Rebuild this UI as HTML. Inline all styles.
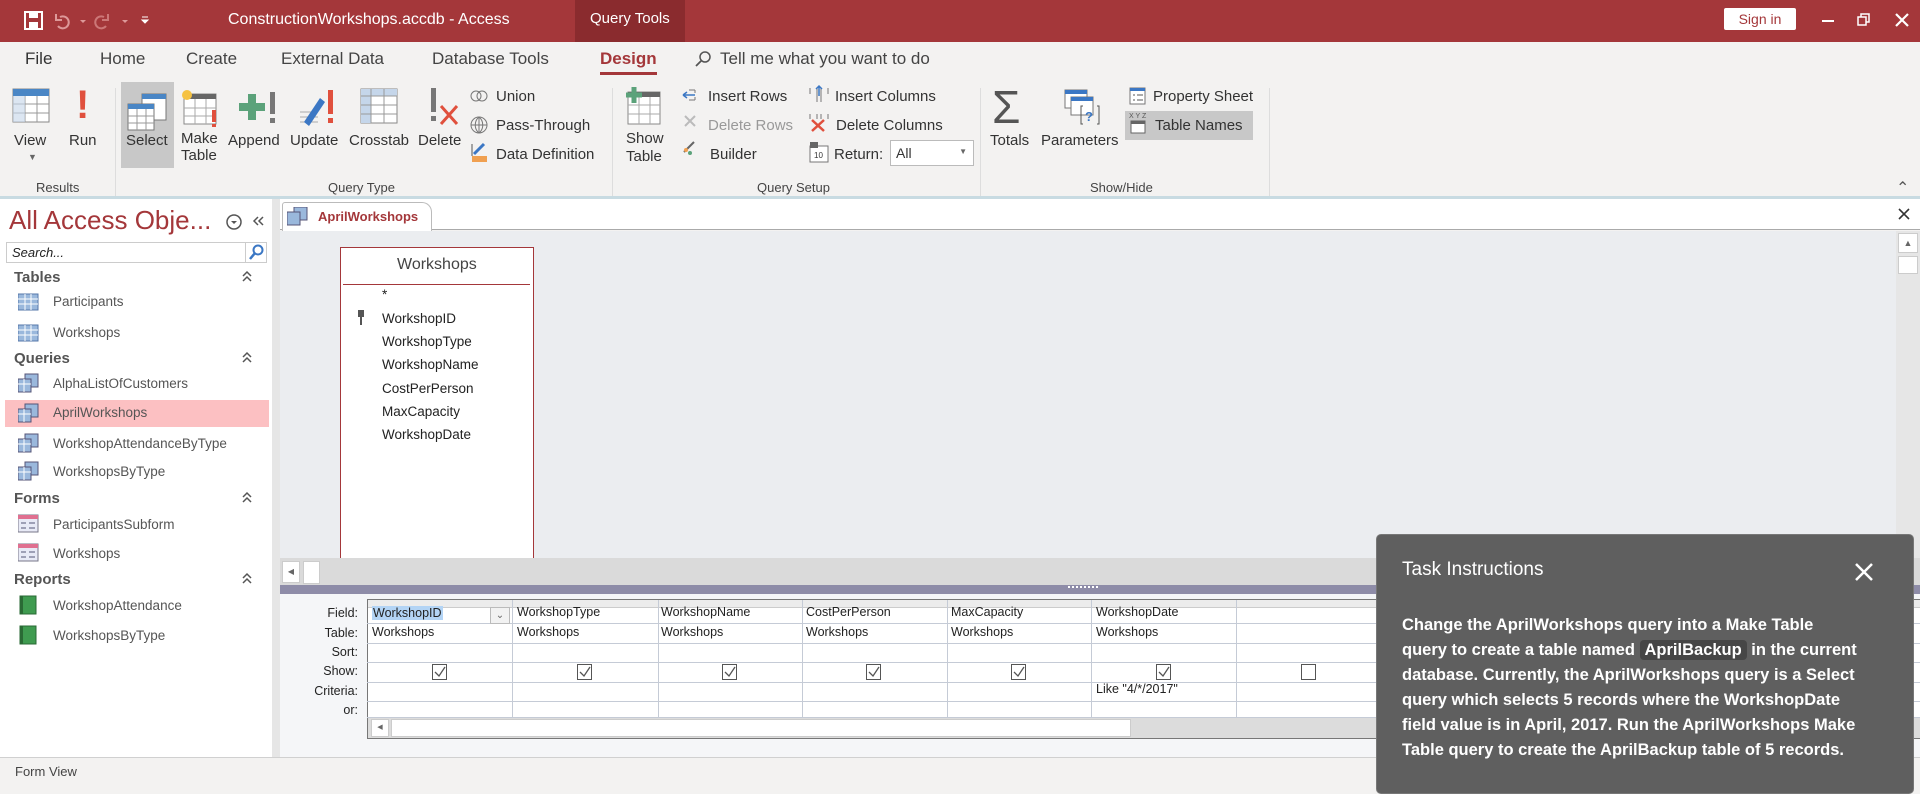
<!DOCTYPE html>
<html><head><meta charset="utf-8">
<style>
*{margin:0;padding:0;box-sizing:border-box}
body{width:1920px;height:788px;overflow:hidden;position:relative;font-family:"Liberation Sans",sans-serif;background:#f3f2f1;color:#333}
.a{position:absolute;white-space:nowrap}
.t{font-size:15px;color:#333}
.lbl{font-size:13px;color:#444}
.nav{font-size:13.5px;color:#555}
.hd{font-size:15px;font-weight:bold;color:#555}
.fld{font-size:13.5px;color:#222}
.g{font-size:12.5px;color:#222}
</style></head><body>
<!-- title bar -->
<div class="a" style="left:0;top:0;width:1920px;height:42px;background:#a4373a"></div>
<div class="a" style="left:575px;top:0;width:110px;height:42px;background:#8a2b2e"></div>
<div class="a" style="left:590px;top:10px;color:#fff;font-size:15px">Query Tools</div>
<div class="a" style="left:228px;top:11px;color:#fff;font-size:16px">ConstructionWorkshops.accdb - Access</div>
<svg class="a" style="left:22px;top:9px" width="140" height="24" viewBox="0 0 140 24">
<rect x="3" y="3" width="17" height="17" fill="none" stroke="#fff" stroke-width="2"/><rect x="7" y="3" width="9" height="6" fill="#fff"/><rect x="7" y="13" width="9" height="7" fill="#fff"/>
<path d="M38 8 a6 6 0 1 1 -2 9" fill="none" stroke="#d99" stroke-width="2"/><path d="M34 5 l0 6 l6 0" fill="none" stroke="#d99" stroke-width="2"/>
<path d="M58 11 l3 3 l3 -3z" fill="#d99"/>
<path d="M82 8 a6 6 0 1 0 2 9" fill="none" stroke="#c77" stroke-width="2"/><path d="M86 5 l0 6 l-6 0" fill="none" stroke="#c77" stroke-width="2"/>
<path d="M100 11 l3 3 l3 -3z" fill="#d99"/>
<path d="M120 8 h6 M120 11 l3 3 l3 -3z" stroke="#fff" fill="#fff"/>
</svg>
<div class="a" style="left:1724px;top:8px;width:72px;height:22px;background:#fff;border-radius:2px;color:#a4373a;font-size:14px;text-align:center;line-height:22px">Sign in</div>
<div class="a" style="left:1822px;top:20px;width:12px;height:2px;background:#fff"></div>
<svg class="a" style="left:1857px;top:13px" width="14" height="14"><rect x="1" y="4" width="8" height="8" fill="none" stroke="#fff" stroke-width="1.5"/><path d="M4 4V1h8v8H9" fill="none" stroke="#fff" stroke-width="1.5"/></svg>
<svg class="a" style="left:1895px;top:13px" width="14" height="14"><path d="M1 1L13 13M13 1L1 13" stroke="#fff" stroke-width="2.2"/></svg>
<!-- tabs -->
<div class="a" style="left:25px;top:49px;font-size:17px;color:#333">File</div>
<div class="a" style="left:100px;top:49px;font-size:17px;color:#444">Home</div>
<div class="a" style="left:186px;top:49px;font-size:17px;color:#444">Create</div>
<div class="a" style="left:281px;top:49px;font-size:17px;color:#444">External Data</div>
<div class="a" style="left:432px;top:49px;font-size:17px;color:#444">Database Tools</div>
<div class="a" style="left:600px;top:49px;font-size:17px;color:#a4373a;font-weight:bold">Design</div>
<div class="a" style="left:600px;top:72px;width:57px;height:3px;background:#a4373a"></div>
<svg class="a" style="left:694px;top:50px" width="18" height="18"><circle cx="11" cy="7" r="5" fill="none" stroke="#555" stroke-width="1.5"/><path d="M7 11L2 16" stroke="#555" stroke-width="1.8"/></svg>
<div class="a" style="left:720px;top:49px;font-size:17px;color:#444">Tell me what you want to do</div>
<!-- ribbon -->
<div class="a" style="left:0;top:196px;width:1920px;height:3px;background:#c8dbe2"></div>
<div class="a" style="left:115px;top:88px;width:1px;height:108px;background:#ddd"></div>
<div class="a" style="left:612px;top:88px;width:1px;height:108px;background:#ddd"></div>
<div class="a" style="left:980px;top:88px;width:1px;height:108px;background:#ddd"></div>
<div class="a" style="left:1269px;top:88px;width:1px;height:108px;background:#ddd"></div>
<div class="a lbl" style="left:36px;top:180px">Results</div>
<div class="a lbl" style="left:328px;top:180px">Query Type</div>
<div class="a lbl" style="left:757px;top:180px">Query Setup</div>
<div class="a lbl" style="left:1090px;top:180px">Show/Hide</div>
<div class="a" style="left:1896px;top:178px;font-size:16px;color:#555">&#8963;</div>
<!-- results -->
<svg class="a" style="left:12px;top:88px" width="38" height="36"><rect x="1" y="1" width="36" height="33" fill="#fff" stroke="#888"/><rect x="1" y="1" width="36" height="7" fill="#4a86c5"/><path d="M1 16h36M1 25h36M13 8v26M25 8v26" stroke="#999"/><rect x="1" y="8" width="12" height="26" fill="#c5d6ea" opacity=".6"/></svg>
<div class="a t" style="left:14px;top:132px">View</div>
<div class="a" style="left:28px;top:152px;font-size:9px;color:#666">▼</div>
<div class="a" style="left:76px;top:83px;font-size:40px;color:#e0503d;font-weight:bold">!</div>
<div class="a t" style="left:69px;top:132px">Run</div>
<!-- query type -->
<div class="a" style="left:121px;top:82px;width:53px;height:86px;background:#c8c8c8"></div>
<svg class="a" style="left:126px;top:92px" width="44" height="40"><rect x="16" y="2" width="24" height="26" fill="#fff" stroke="#777"/><rect x="16" y="2" width="24" height="5" fill="#4a86c5"/><rect x="2" y="12" width="26" height="26" fill="#fff" stroke="#777"/><rect x="2" y="12" width="26" height="5" fill="#4a86c5"/><path d="M2 24h26M2 31h26M11 17v21M20 17v21" stroke="#999"/></svg>
<div class="a t" style="left:126px;top:132px">Select</div>
<svg class="a" style="left:180px;top:88px" width="42" height="40"><rect x="4" y="6" width="32" height="30" fill="#fff" stroke="#888"/><rect x="4" y="6" width="32" height="5" fill="#666"/><path d="M4 20h32M4 28h32M15 11v25M26 11v25" stroke="#aaa"/><circle cx="7" cy="7" r="5" fill="#f5c242"/><rect x="32" y="22" width="4" height="12" fill="#e0503d"/><rect x="32" y="36" width="4" height="3" fill="#e0503d"/></svg>
<div class="a t" style="left:181px;top:130px;line-height:17px">Make<br>Table</div>
<svg class="a" style="left:238px;top:90px" width="42" height="40"><path d="M10 4v26M-3 17h26" stroke="#5ba27a" stroke-width="8" transform="translate(4,0)"/><rect x="32" y="2" width="5" height="22" fill="#777"/><rect x="32" y="28" width="5" height="5" fill="#777"/></svg>
<div class="a t" style="left:228px;top:132px">Append</div>
<svg class="a" style="left:296px;top:88px" width="42" height="40"><path d="M4 24h18M4 29h18M4 34h18" stroke="#aaa"/><path d="M8 34L24 10l5 4L13 38z" fill="#3b77c4"/><rect x="32" y="2" width="5" height="24" fill="#e0503d"/><rect x="32" y="30" width="5" height="5" fill="#e0503d"/></svg>
<div class="a t" style="left:290px;top:132px">Update</div>
<svg class="a" style="left:360px;top:88px" width="38" height="38"><rect x="1" y="1" width="36" height="34" fill="#fff" stroke="#888"/><rect x="1" y="1" width="36" height="7" fill="#c5d6ea"/><rect x="1" y="1" width="10" height="34" fill="#c5d6ea"/><path d="M1 8h36M1 17h36M1 26h36M11 1v34M24 1v34" stroke="#999"/></svg>
<div class="a t" style="left:349px;top:132px">Crosstab</div>
<svg class="a" style="left:425px;top:86px" width="40" height="42"><rect x="6" y="2" width="5" height="24" fill="#777"/><rect x="6" y="30" width="5" height="5" fill="#777"/><path d="M16 20L32 38M32 20L16 38" stroke="#e0503d" stroke-width="3"/></svg>
<div class="a t" style="left:418px;top:132px">Delete</div>
<svg class="a" style="left:469px;top:88px" width="20" height="80"><circle cx="7" cy="8" r="5" fill="none" stroke="#777"/><circle cx="13" cy="8" r="5" fill="none" stroke="#777"/><circle cx="10" cy="37" r="8" fill="none" stroke="#777"/><path d="M2 37h16M10 29v16M10 29c-5 4-5 12 0 16M10 29c5 4 5 12 0 16" fill="none" stroke="#777"/><path d="M3 68h15v6H3z" fill="#f0a050"/><path d="M5 66L15 56" stroke="#3b77c4" stroke-width="3"/><path d="M3 56v12" stroke="#555"/></svg>
<div class="a t" style="left:496px;top:88px">Union</div>
<div class="a t" style="left:496px;top:117px">Pass-Through</div>
<div class="a t" style="left:496px;top:146px">Data Definition</div>
<!-- query setup -->
<svg class="a" style="left:624px;top:86px" width="40" height="42"><rect x="4" y="6" width="32" height="32" fill="#fff" stroke="#888"/><rect x="4" y="6" width="32" height="5" fill="#666"/><path d="M4 19h32M4 28h32M15 11v27M26 11v27" stroke="#aaa"/><path d="M10 1v16M2 9h16" stroke="#5ba27a" stroke-width="5"/></svg>
<div class="a t" style="left:626px;top:130px;line-height:18px">Show<br>Table</div>
<svg class="a" style="left:681px;top:86px" width="20" height="80"><path d="M8 4h6M8 14h6M14 4v3M14 11v3" stroke="#777"/><path d="M2 9h12M2 9l4-3M2 9l4 3" stroke="#3b77c4" stroke-width="1.5" fill="none"/><path d="M4 30l10 10M14 30L4 40" stroke="#bbb" stroke-width="2"/><path d="M3 66L13 56" stroke="#666" stroke-width="2"/><circle cx="5" cy="64" r="2" fill="#f0a050"/><circle cx="9" cy="67" r="2" fill="#5ba27a"/></svg>
<div class="a t" style="left:708px;top:88px">Insert Rows</div>
<div class="a t" style="left:708px;top:117px;color:#999">Delete Rows</div>
<div class="a t" style="left:710px;top:146px">Builder</div>
<svg class="a" style="left:807px;top:84px" width="24" height="84"><path d="M3 4v6M10 4v14M14 4v14M21 4v6" stroke="#777"/><path d="M12 2v10M9 5l3-3 3 3" stroke="#3b77c4" stroke-width="1.5" fill="none"/><path d="M3 30v5M21 30v5M10 30v5M14 30v5" stroke="#777"/><path d="M5 36l12 11M17 36L5 47" stroke="#e0503d" stroke-width="2.5"/><rect x="3" y="62" width="18" height="16" fill="#fff" stroke="#777"/><rect x="3" y="58" width="8" height="6" fill="#666"/><text x="7" y="74" font-size="8" fill="#333" font-family="Liberation Sans">10</text></svg>
<div class="a t" style="left:835px;top:88px">Insert Columns</div>
<div class="a t" style="left:836px;top:117px">Delete Columns</div>
<div class="a t" style="left:834px;top:146px">Return:</div>
<div class="a" style="left:890px;top:140px;width:84px;height:26px;background:#fff;border:1px solid #bbb;font-size:14px;padding:4px 5px">All<span style="position:absolute;right:6px;top:6px;font-size:8px;color:#666">▼</span></div>
<!-- show/hide -->
<div class="a" style="left:992px;top:80px;font-size:46px;color:#555">&Sigma;</div>
<div class="a t" style="left:990px;top:132px">Totals</div>
<svg class="a" style="left:1063px;top:88px" width="40" height="40"><rect x="2" y="2" width="22" height="18" fill="#fff" stroke="#777"/><rect x="2" y="2" width="22" height="4" fill="#3b77c4"/><rect x="8" y="9" width="22" height="18" fill="#fff" stroke="#777"/><rect x="8" y="9" width="22" height="4" fill="#3b77c4"/><path d="M20 18h-2v18h2M34 18h2v18h-2" stroke="#555" fill="none"/><text x="22" y="33" font-size="13" fill="#3b77c4" font-family="Liberation Sans" font-weight="bold">?</text></svg>
<div class="a t" style="left:1041px;top:132px">Parameters</div>
<div class="a" style="left:1125px;top:111px;width:128px;height:29px;background:#c8c8c8"></div>
<svg class="a" style="left:1128px;top:86px" width="20" height="52"><rect x="2" y="2" width="15" height="16" fill="#fff" stroke="#777"/><rect x="2" y="2" width="15" height="3" fill="#3b77c4"/><path d="M5 9h2M9 9h6M5 14h2M9 14h6" stroke="#555"/><text x="1" y="32" font-size="7" fill="#555" font-family="Liberation Sans">X Y Z</text><rect x="3" y="35" width="14" height="12" fill="#fff" stroke="#666"/><rect x="3" y="35" width="14" height="3" fill="#666"/></svg>
<div class="a t" style="left:1153px;top:88px">Property Sheet</div>
<div class="a t" style="left:1155px;top:117px">Table Names</div>
<!-- nav pane -->
<div class="a" style="left:0;top:199px;width:272px;height:558px;background:#fff"></div>
<div class="a" style="left:272px;top:199px;width:8px;height:558px;background:#e6e6e6"></div>
<div class="a" style="left:9px;top:205px;font-size:26px;color:#a4373a">All Access Obje...</div>
<svg class="a" style="left:226px;top:212px" width="40" height="20"><circle cx="8" cy="10" r="7" fill="none" stroke="#555" stroke-width="1.5"/><path d="M5 9l3 3 3-3z" fill="#555"/><path d="M32 5l-4 4 4 4M37 5l-4 4 4 4" fill="none" stroke="#555" stroke-width="1.5"/></svg>
<div class="a" style="left:6px;top:242px;width:261px;height:21px;border:1px solid #ccc;background:#fff;font-size:13px;font-style:italic;color:#222;padding:2px 5px">Search...</div>
<div class="a" style="left:245px;top:243px;width:1px;height:19px;background:#ccc"></div>
<svg class="a" style="left:248px;top:244px" width="17" height="17"><circle cx="10" cy="6" r="4.5" fill="none" stroke="#3b77c4" stroke-width="2"/><path d="M7 9l-5 6" stroke="#3b77c4" stroke-width="2.5"/></svg>
<div class="a" style="left:5px;top:400px;width:264px;height:27px;background:#fcc0c2"></div>
<div class="a hd" style="left:14px;top:269px">Tables</div>
<div class="a hd" style="left:14px;top:350px">Queries</div>
<div class="a hd" style="left:14px;top:490px">Forms</div>
<div class="a hd" style="left:14px;top:571px">Reports</div>
<svg class="a" style="left:240px;top:268px" width="14" height="330"><g fill="none" stroke="#555" stroke-width="1.5"><path d="M3 8l4-4 4 4M3 13l4-4 4 4"/><path d="M3 89l4-4 4 4M3 94l4-4 4 4"/><path d="M3 229l4-4 4 4M3 234l4-4 4 4"/><path d="M3 310l4-4 4 4M3 315l4-4 4 4"/></g></svg>
<div class="a nav" style="left:53px;top:294px">Participants</div>
<div class="a nav" style="left:53px;top:325px">Workshops</div>
<div class="a nav" style="left:53px;top:376px">AlphaListOfCustomers</div>
<div class="a nav" style="left:53px;top:405px">AprilWorkshops</div>
<div class="a nav" style="left:53px;top:436px">WorkshopAttendanceByType</div>
<div class="a nav" style="left:53px;top:464px">WorkshopsByType</div>
<div class="a nav" style="left:53px;top:517px">ParticipantsSubform</div>
<div class="a nav" style="left:53px;top:546px">Workshops</div>
<div class="a nav" style="left:53px;top:598px">WorkshopAttendance</div>
<div class="a nav" style="left:53px;top:628px">WorkshopsByType</div>
<svg class="a" style="left:18px;top:290px" width="22" height="360">
<defs><g id="tb"><rect x="0" y="0" width="20" height="16" fill="#9ab8dc" stroke="#5577aa"/><path d="M0 5h20M0 10h20M7 0v16M13 0v16" stroke="#fff"/></g>
<g id="qy"><rect x="7" y="0" width="13" height="13" fill="#9ab8dc" stroke="#557"/><rect x="0" y="5" width="13" height="13" fill="#9ab8dc" stroke="#557"/><path d="M0 10h13M6 5v13" stroke="#fff"/></g>
<g id="fm"><rect x="0" y="0" width="20" height="17" fill="#e8eaf6" stroke="#778"/><rect x="0" y="0" width="20" height="4" fill="#e07090"/><path d="M3 8h5M11 8h6M3 13h5M11 13h6" stroke="#557"/></g>
<g id="rp"><rect x="2" y="0" width="16" height="18" fill="#3f9b50" stroke="#2a6a35"/><rect x="2" y="0" width="3" height="18" fill="#2a6a35"/></g></defs>
<use href="#tb" x="0" y="4"/><use href="#tb" x="0" y="35"/>
<use href="#qy" x="0" y="84"/><use href="#qy" x="0" y="114"/><use href="#qy" x="0" y="144"/><use href="#qy" x="0" y="172"/>
<use href="#fm" x="0" y="225"/><use href="#fm" x="0" y="254"/>
<use href="#rp" x="0" y="306"/><use href="#rp" x="0" y="336"/>
</svg>
<!-- document area -->
<div class="a" style="left:280px;top:199px;width:1640px;height:31px;background:#fff;border-bottom:1px solid #aaa"></div>
<div class="a" style="left:282px;top:202px;width:150px;height:29px;background:#fff;border:1px solid #bbb;border-bottom:none;border-radius:3px 10px 0 0"></div>
<svg class="a" style="left:287px;top:207px" width="22" height="20"><rect x="7" y="0" width="13" height="13" fill="#9ab8dc" stroke="#557"/><rect x="0" y="5" width="13" height="13" fill="#9ab8dc" stroke="#557"/></svg>
<div class="a" style="left:318px;top:209px;font-size:13px;font-weight:bold;color:#a4373a">AprilWorkshops</div>
<svg class="a" style="left:1898px;top:208px" width="12" height="12"><path d="M1 1L11 11M11 1L1 11" stroke="#333" stroke-width="1.6"/></svg>
<div class="a" style="left:280px;top:231px;width:1616px;height:327px;background:#ebedf0"></div>
<div class="a" style="left:1896px;top:231px;width:24px;height:327px;background:#e6e6e6"></div>
<div class="a" style="left:1898px;top:233px;width:20px;height:20px;background:#fff;border:1px solid #ccc;font-size:9px;text-align:center;line-height:18px;color:#666">▲</div>
<div class="a" style="left:1898px;top:256px;width:20px;height:18px;background:#fff;border:1px solid #ccc"></div>
<div class="a" style="left:340px;top:247px;width:194px;height:311px;background:#fff;border:1px solid #a4373a;border-bottom:none"></div>
<div class="a" style="left:397px;top:256px;font-size:16px;color:#444">Workshops</div>
<div class="a" style="left:343px;top:284px;width:187px;height:1px;background:#a4373a"></div>
<div class="a fld" style="left:382px;top:287px">*</div>
<svg class="a" style="left:357px;top:310px" width="8" height="16"><rect x="1" y="0" width="6" height="7" fill="#555"/><rect x="3" y="6" width="2" height="9" fill="#555"/></svg>
<div class="a fld" style="left:382px;top:311px">WorkshopID</div>
<div class="a fld" style="left:382px;top:334px">WorkshopType</div>
<div class="a fld" style="left:382px;top:357px">WorkshopName</div>
<div class="a fld" style="left:382px;top:381px">CostPerPerson</div>
<div class="a fld" style="left:382px;top:404px">MaxCapacity</div>
<div class="a fld" style="left:382px;top:427px">WorkshopDate</div>
<div class="a" style="left:280px;top:558px;width:1640px;height:27px;background:#dadada"></div>
<div class="a" style="left:282px;top:561px;width:18px;height:22px;background:#fff;border:1px solid #ccc;font-size:8px;line-height:20px;text-align:center;color:#666">◀</div>
<div class="a" style="left:303px;top:561px;width:17px;height:23px;background:#fff;border:1px solid #ccc"></div>
<div class="a" style="left:280px;top:585px;width:1640px;height:9px;background:#8e8ca8"></div>
<div class="a" style="left:1068px;top:586px;width:30px;height:4px;border-top:2px dotted #fff"></div>
<!-- grid -->
<div class="a" style="left:280px;top:594px;width:1640px;height:163px;background:#f5f6f8"></div>
<div class="a" style="left:367px;top:599px;width:1553px;height:140px;background:#fff;border:1px solid #777;border-right:none"></div>
<div class="a" style="left:368px;top:600px;width:1552px;height:8px;background:#ececec;border-bottom:1px solid #ccc"></div>
<svg class="a" style="left:367px;top:600px" width="1553" height="118">
<g stroke="#c5cbd6"><path d="M0 23.5h1553M0 43.5h1553M0 62.5h1553M0 82.5h1553M0 101.5h1553M0 117.5h1553"/>
<path d="M145.5 0v118M291.5 0v118M435.5 0v118M580.5 0v118M724.5 0v118M869.5 0v118M1013.5 0v118"/></g></svg>
<div class="a g" style="right:1562px;top:606px;text-align:right">Field:</div>
<div class="a g" style="right:1562px;top:626px">Table:</div>
<div class="a g" style="right:1562px;top:645px">Sort:</div>
<div class="a g" style="right:1562px;top:664px">Show:</div>
<div class="a g" style="right:1562px;top:684px">Criteria:</div>
<div class="a g" style="right:1562px;top:703px">or:</div>
<div class="a g" style="left:372px;top:606px;background:#b3d4f5;padding:0 1px">WorkshopID</div>
<div class="a" style="left:490px;top:607px;width:20px;height:17px;border:1px solid #bbb;background:#f2f2f2;font-size:10px;text-align:center;color:#666;line-height:15px">&#8964;</div>
<div class="a g" style="left:517px;top:605px">WorkshopType</div>
<div class="a g" style="left:661px;top:605px">WorkshopName</div>
<div class="a g" style="left:806px;top:605px">CostPerPerson</div>
<div class="a g" style="left:951px;top:605px">MaxCapacity</div>
<div class="a g" style="left:1096px;top:605px">WorkshopDate</div>
<div class="a g" style="left:372px;top:625px">Workshops</div>
<div class="a g" style="left:517px;top:625px">Workshops</div>
<div class="a g" style="left:661px;top:625px">Workshops</div>
<div class="a g" style="left:806px;top:625px">Workshops</div>
<div class="a g" style="left:951px;top:625px">Workshops</div>
<div class="a g" style="left:1096px;top:625px">Workshops</div>
<div class="a g" style="left:1096px;top:682px">Like "4/*/2017"</div>
<svg class="a" style="left:367px;top:662px" width="1020" height="20"><g fill="#fff" stroke="#555"><rect x="65.5" y="2.5" width="14" height="15"/><rect x="210.5" y="2.5" width="14" height="15"/><rect x="355.5" y="2.5" width="14" height="15"/><rect x="499.5" y="2.5" width="14" height="15"/><rect x="644.5" y="2.5" width="14" height="15"/><rect x="789.5" y="2.5" width="14" height="15"/><rect x="934.5" y="2.5" width="14" height="15"/></g>
<g fill="none" stroke="#555" stroke-width="1.3"><path d="M68 10l4 4 6-9"/><path d="M213 10l4 4 6-9"/><path d="M358 10l4 4 6-9"/><path d="M502 10l4 4 6-9"/><path d="M647 10l4 4 6-9"/><path d="M792 10l4 4 6-9"/></g></svg>
<div class="a" style="left:368px;top:718px;width:1552px;height:20px;background:#dcdcdc"></div>
<div class="a" style="left:371px;top:719px;width:18px;height:18px;background:#fff;border:1px solid #ccc;font-size:7px;line-height:16px;text-align:center;color:#666">◀</div>
<div class="a" style="left:391px;top:719px;width:740px;height:18px;background:#fff;border:1px solid #ccc"></div>
<!-- status -->
<div class="a" style="left:0;top:757px;width:1920px;height:31px;background:#f3f2f1;border-top:1px solid #d0d0d0"></div>
<div class="a" style="left:15px;top:764px;font-size:13px;color:#444">Form View</div>
<!-- task panel -->
<div class="a" style="left:1376px;top:534px;width:538px;height:260px;background:#5f5f5f;border-radius:5px;border:1px solid #777"></div>
<div class="a" style="left:1402px;top:559px;font-size:19px;color:#fff">Task Instructions</div>
<svg class="a" style="left:1854px;top:562px" width="20" height="20"><path d="M2 2L18 18M18 2L2 18" stroke="#fff" stroke-width="2.5"/></svg>
<div class="a" style="left:1402px;top:613px;font-size:16.5px;font-weight:bold;color:#fff;line-height:25px">Change the AprilWorkshops query into a Make Table<br>query to create a table named <span style="background:#464646;border-radius:4px;padding:1px 5px">AprilBackup</span> in the current<br>database. Currently, the AprilWorkshops query is a Select<br>query which selects 5 records where the WorkshopDate<br>field value is in April, 2017. Run the AprilWorkshops Make<br>Table query to create the AprilBackup table of 5 records.</div>
</body></html>
